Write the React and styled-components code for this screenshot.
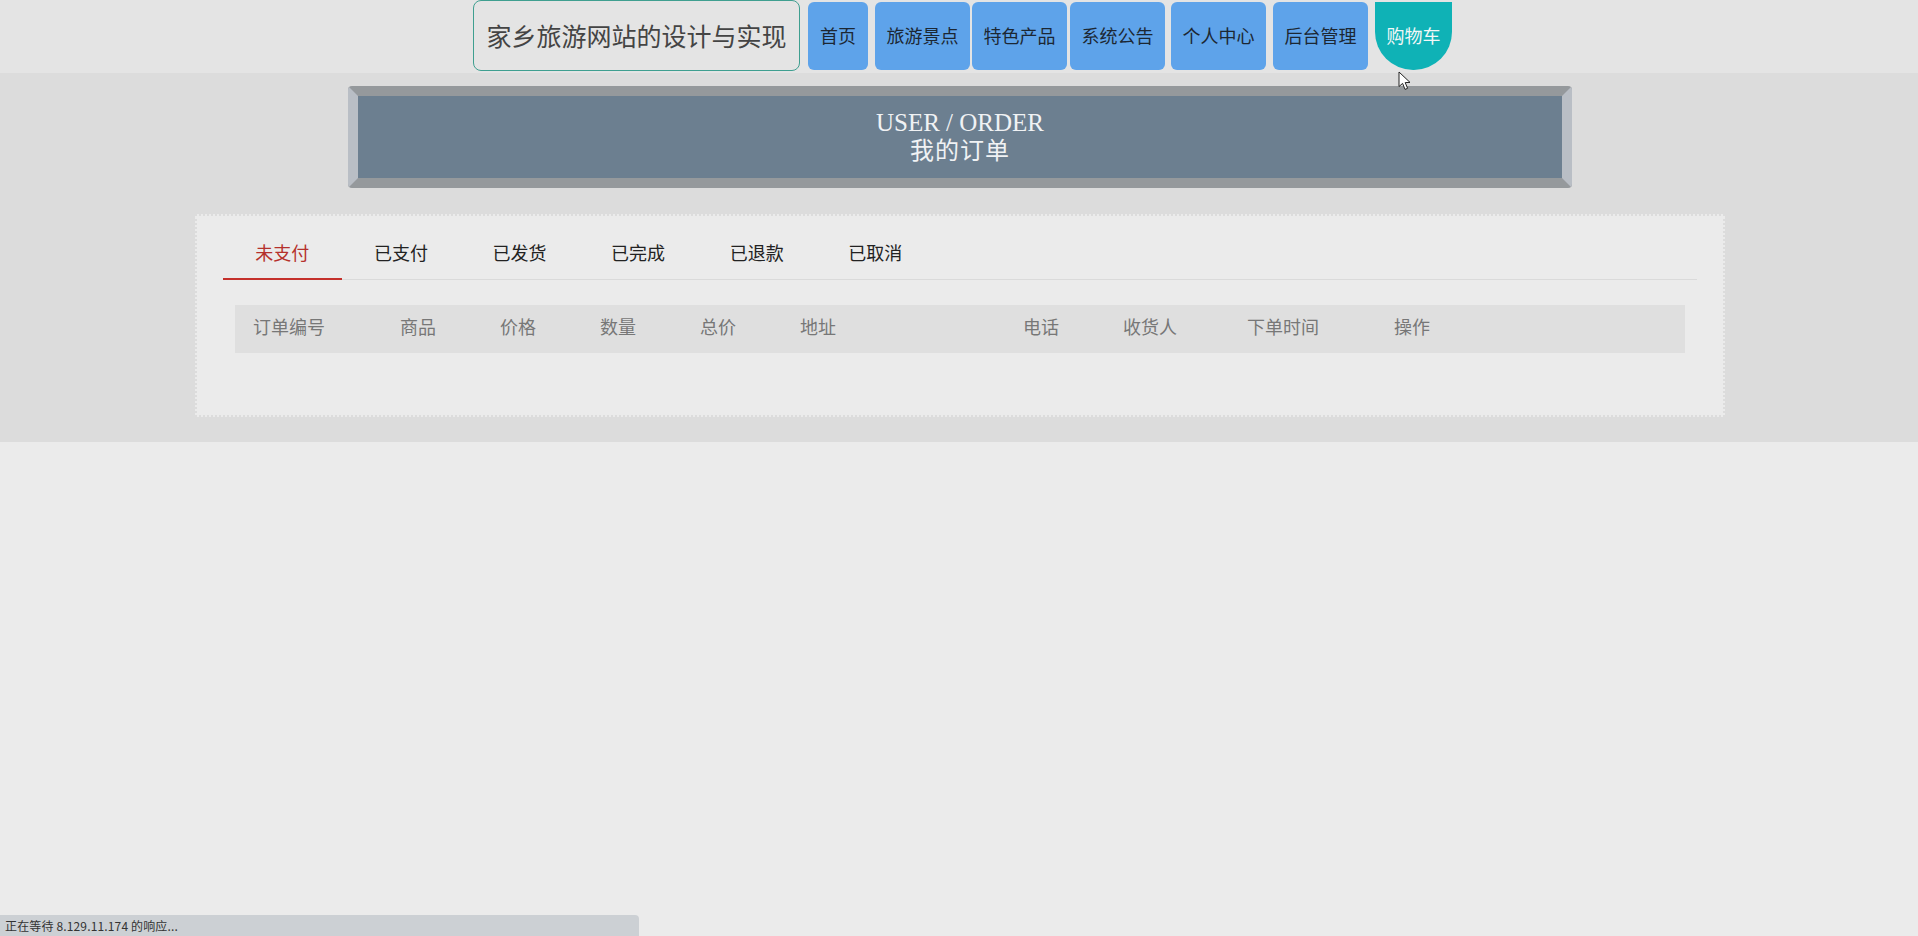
import React from 'react'
import styled, { createGlobalStyle } from 'styled-components'

const SANS = `"Noto Sans CJK SC", "Liberation Sans", sans-serif`

const navItems = [
  { label: '首页', gap: 8, width: 60 },
  { label: '旅游景点', gap: 7, width: 95 },
  { label: '特色产品', gap: 2, width: 95 },
  { label: '系统公告', gap: 3, width: 95 },
  { label: '个人中心', gap: 6, width: 95 },
  { label: '后台管理', gap: 7, width: 95 },
]

const tabs = ['未支付', '已支付', '已发货', '已完成', '已退款', '已取消']

const columns = [
  { label: '订单编号', width: 147 },
  { label: '商品', width: 100 },
  { label: '价格', width: 100 },
  { label: '数量', width: 100 },
  { label: '总价', width: 100 },
  { label: '地址', width: 223 },
  { label: '电话', width: 100 },
  { label: '收货人', width: 124 },
  { label: '下单时间', width: 147 },
  { label: '操作', width: 100 },
]

const App = () => {
  return (
    <>
      <GlobalStyle />
      <TopBar>
        <Logo>家乡旅游网站的设计与实现</Logo>
        {navItems.map((item) => (
          <NavItem key={item.label} $gap={item.gap} $width={item.width}>
            {item.label}
          </NavItem>
        ))}
        <CartItem>购物车</CartItem>
      </TopBar>
      <Band>
        <Banner>
          <BannerTitle>USER / ORDER</BannerTitle>
          <BannerSubtitle>我的订单</BannerSubtitle>
        </Banner>
        <Panel>
          <TabList>
            {tabs.map((tab, i) => (
              <Tab key={tab} $active={i === 0}>
                {tab}
              </Tab>
            ))}
          </TabList>
          <TableHead>
            {columns.map((col) => (
              <HeadCell key={col.label} $width={col.width}>
                {col.label}
              </HeadCell>
            ))}
          </TableHead>
        </Panel>
      </Band>
      <Cursor viewBox='0 0 14 20' aria-hidden='true'>
        <path
          d='M1 1 L1 15.5 L4.6 12.4 L7 18.4 L9.6 17.3 L7.2 11.6 L12 11.4 Z'
          fill='#fff'
          stroke='#222'
          strokeWidth='1'
          strokeLinejoin='round'
        />
      </Cursor>
      <StatusBar>正在等待 8.129.11.174 的响应...</StatusBar>
    </>
  )
}

const GlobalStyle = createGlobalStyle`
  html, body {
    margin: 0;
    padding: 0;
    min-height: 100%;
    background: #ebebeb;
    font-family: ${SANS};
    overflow: hidden;
  }
`

const TopBar = styled.header`
  height: 73px;
  display: flex;
  align-items: flex-start;
  padding-left: 473px;
  background: #e4e4e4;
  box-sizing: border-box;
`

const Logo = styled.div`
  width: 327px;
  height: 71px;
  padding-bottom: 2px;
  display: flex;
  align-items: center;
  justify-content: center;
  box-sizing: border-box;
  border: 1px solid #3f9f90;
  border-radius: 8px;
  font-size: 25px;
  color: #444;
`

const NavItem = styled.a`
  width: ${(p) => p.$width}px;
  height: 68px;
  margin-top: 2px;
  margin-left: ${(p) => p.$gap}px;
  padding-bottom: 2px;
  box-sizing: border-box;
  display: flex;
  align-items: center;
  justify-content: center;
  border-radius: 6px;
  background: #5ea3ea;
  font-size: 18px;
  color: #1c2733;
`

const CartItem = styled.a`
  width: 77px;
  height: 68px;
  margin-top: 2px;
  margin-left: 7px;
  padding-bottom: 2px;
  box-sizing: border-box;
  display: flex;
  align-items: center;
  justify-content: center;
  border-radius: 0 0 38px 38px;
  background: #0fb2b6;
  font-size: 18px;
  color: #f2f7f7;
`

const Band = styled.main`
  height: 369px;
  box-sizing: border-box;
  padding-top: 13px;
  display: flex;
  flex-direction: column;
  align-items: center;
  background: #dcdcdc;
`

const Banner = styled.section`
  width: 1224px;
  height: 102px;
  margin-left: 2px;
  box-sizing: border-box;
  padding-bottom: 1px;
  border-style: solid;
  border-width: 10px;
  border-color: #95999c #b9bec5;
  border-radius: 4px;
  background: #6c7f90;
  display: flex;
  flex-direction: column;
  align-items: center;
  justify-content: center;
  color: #f0f2f4;
  font-family: "Liberation Serif", "Noto Sans CJK SC", serif;
`

const BannerTitle = styled.div`
  font-size: 25px;
  line-height: 28px;
`

const BannerSubtitle = styled.div`
  font-size: 24px;
  line-height: 28px;
  letter-spacing: 1px;
`

const Panel = styled.section`
  width: 1530px;
  height: 203px;
  margin-top: 26px;
  margin-left: 2px;
  box-sizing: border-box;
  padding: 9px 26px 0;
  border: 2px dotted #dcdcdc;
  background: #ebebeb;
`

const TabList = styled.nav`
  height: 54px;
  display: flex;
  border-bottom: 1px solid #dadada;
`

const Tab = styled.a`
  width: 118.6px;
  height: 55px;
  box-sizing: border-box;
  display: flex;
  justify-content: center;
  padding-top: 14px;
  line-height: 26px;
  font-size: 18px;
  color: ${(p) => (p.$active ? '#b5312c' : '#222')};
  border-bottom: ${(p) => (p.$active ? '2px solid #c4302b' : 'none')};
`

const TableHead = styled.div`
  height: 48px;
  margin: 25px 12px 0;
  padding: 0 0 6px 18px;
  box-sizing: border-box;
  display: flex;
  align-items: center;
  background: #dfdfdf;
`

const HeadCell = styled.div`
  width: ${(p) => p.$width}px;
  font-size: 18px;
  color: #777;
`

const Cursor = styled.svg`
  position: absolute;
  left: 1398px;
  top: 71px;
  width: 14px;
  height: 20px;
`

const StatusBar = styled.footer`
  position: fixed;
  left: 0;
  bottom: 0;
  width: 639px;
  height: 21px;
  box-sizing: border-box;
  padding-left: 5px;
  background: #ccd0d4;
  border-radius: 0 4px 0 0;
  font-size: 12px;
  line-height: 21px;
  letter-spacing: 0.15px;
  color: #333;
`

export default App
